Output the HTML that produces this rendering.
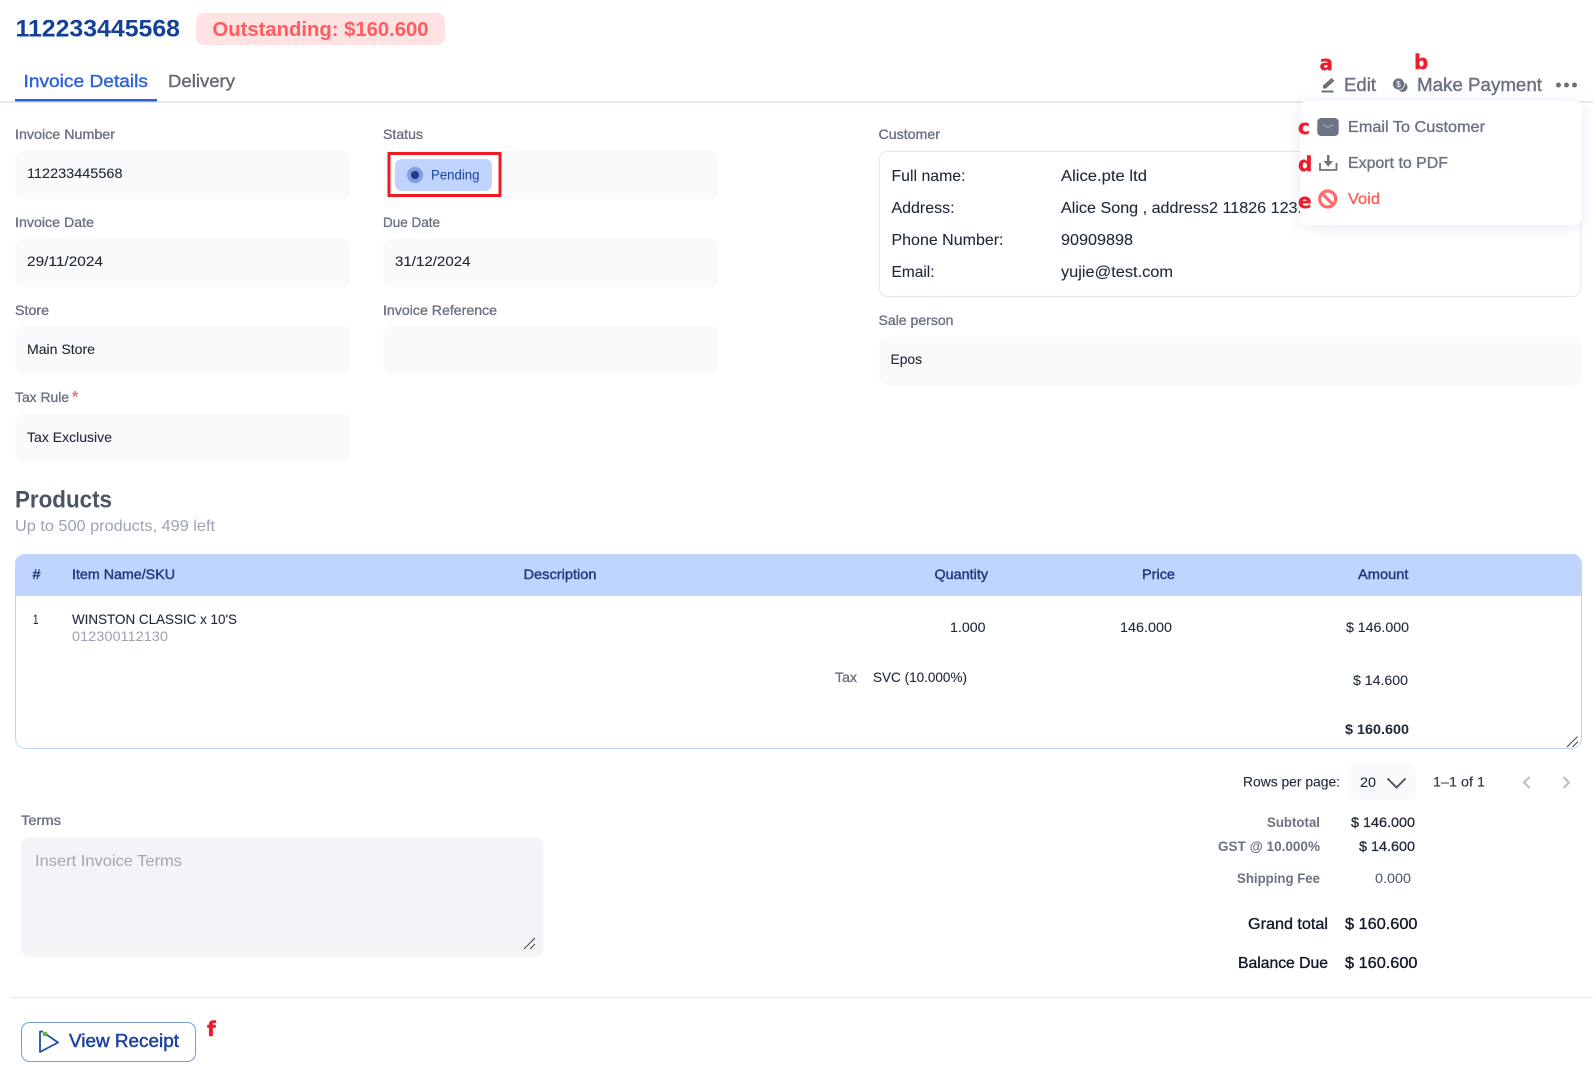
<!DOCTYPE html>
<html lang="en">
<head>
<meta charset="utf-8">
<title>Invoice 112233445568</title>
<style>
html,body{margin:0;padding:0;background:#fff;width:1593px;height:1076px;overflow:hidden}
svg{display:block}
text{font-family:"Liberation Sans",Arial,sans-serif;white-space:pre}
.l{font-size:14px;fill:#6b7280;stroke:#6b7280;stroke-width:.35}
.v{font-size:14px;fill:#1f2937;stroke:#1f2937;stroke-width:.1}
.c{font-size:16px;fill:#1f2937;stroke:#1f2937;stroke-width:.1}
.th{font-size:14px;fill:#1e3a7a;stroke:#1e3a7a;stroke-width:.4}
.menu{font-size:16px;fill:#6b7280;stroke:#6b7280;stroke-width:.35}
.act{font-size:18px;fill:#6b7280;stroke:#6b7280;stroke-width:.4}
.red{font-family:"DejaVu Sans",sans-serif;font-weight:bold;font-size:20px;fill:#ed1c2e;stroke:#ed1c2e;stroke-width:.4}
.s{font-size:14px;fill:#6b7280;font-weight:bold}
.t{font-size:16px;fill:#111827;stroke:#111827;stroke-width:.35}
</style>
</head>
<body>
<svg width="1593" height="1076" viewBox="0 0 1593 1076" xmlns="http://www.w3.org/2000/svg">
<rect width="1593" height="1076" fill="#fff"/>

<!-- header -->
<text x="15.5" y="36.5" font-size="24.5" font-weight="bold" fill="#154099" textLength="164.5" lengthAdjust="spacingAndGlyphs">112233445568</text>
<rect x="196" y="13" width="249" height="32" rx="8" fill="#ffe3e3"/>
<text x="212.5" y="36" font-size="20.5" font-weight="bold" fill="#ff5c5f" textLength="216" lengthAdjust="spacingAndGlyphs">Outstanding: $160.600</text>

<!-- tabs -->
<text x="23.5" y="87" font-size="17.5" fill="#2e62d9" stroke="#2e62d9" stroke-width=".4" textLength="124.5" lengthAdjust="spacingAndGlyphs">Invoice Details</text>
<text x="168" y="87" font-size="17.5" fill="#666a70" stroke="#666a70" stroke-width=".4" textLength="67" lengthAdjust="spacingAndGlyphs">Delivery</text>
<rect x="0" y="101" width="1593" height="2" fill="#e3e8f5"/>
<rect x="15" y="99" width="142" height="2.5" fill="#2f5fd6"/>

<!-- form labels + inputs column 1 -->
<text class="l" x="15" y="139" textLength="100" lengthAdjust="spacingAndGlyphs">Invoice Number</text>
<rect x="15" y="151" width="336" height="48" rx="8" fill="#f9fafb"/>
<text class="v" x="27" y="178" textLength="95.5" lengthAdjust="spacingAndGlyphs">112233445568</text>

<text class="l" x="15" y="227" textLength="79" lengthAdjust="spacingAndGlyphs">Invoice Date</text>
<rect x="15" y="239" width="336" height="48" rx="8" fill="#f9fafb"/>
<text class="v" x="27" y="266" textLength="76" lengthAdjust="spacingAndGlyphs">29/11/2024</text>

<text class="l" x="15" y="315" textLength="34" lengthAdjust="spacingAndGlyphs">Store</text>
<rect x="15" y="326" width="336" height="48" rx="8" fill="#f9fafb"/>
<text class="v" x="27" y="354" textLength="68" lengthAdjust="spacingAndGlyphs">Main Store</text>

<text class="l" x="15" y="402" textLength="54" lengthAdjust="spacingAndGlyphs">Tax Rule</text>
<text x="72" y="402" font-size="16" font-weight="bold" fill="#ff6b6b">*</text>
<rect x="15" y="414" width="336" height="48" rx="8" fill="#f9fafb"/>
<text class="v" x="27" y="442" textLength="85" lengthAdjust="spacingAndGlyphs">Tax Exclusive</text>

<!-- column 2 -->
<text class="l" x="383" y="139" textLength="40" lengthAdjust="spacingAndGlyphs">Status</text>
<rect x="383" y="151" width="336" height="48" rx="8" fill="#f9fafb"/>
<rect x="389" y="153.5" width="111" height="42" fill="#fff" stroke="#ed1c24" stroke-width="3"/>
<rect x="395" y="159" width="97" height="32" rx="7" fill="#bfd4fc"/>
<circle cx="415" cy="175" r="8" fill="#7f9de0"/>
<circle cx="415" cy="175" r="4" fill="#1e3a8a"/>
<text x="431" y="179.500" font-size="14" fill="#1e429f" textLength="48.500" lengthAdjust="spacingAndGlyphs">Pending</text>

<text class="l" x="383" y="227" textLength="57" lengthAdjust="spacingAndGlyphs">Due Date</text>
<rect x="383" y="239" width="336" height="48" rx="8" fill="#f9fafb"/>
<text class="v" x="395" y="266" textLength="75.500" lengthAdjust="spacingAndGlyphs">31/12/2024</text>

<text class="l" x="383" y="315" textLength="114" lengthAdjust="spacingAndGlyphs">Invoice Reference</text>
<rect x="383" y="326" width="336" height="48" rx="8" fill="#f9fafb"/>

<!-- customer -->
<text class="l" x="878.500" y="139" textLength="61.500" lengthAdjust="spacingAndGlyphs">Customer</text>
<rect x="879.500" y="151.500" width="701.500" height="145" rx="8" fill="#fff" stroke="#e3e8f0"/>
<text class="c" x="891.500" y="181" textLength="74" lengthAdjust="spacingAndGlyphs">Full name:</text>
<text class="c" x="891.500" y="213" textLength="63" lengthAdjust="spacingAndGlyphs">Address:</text>
<text class="c" x="891.500" y="245" textLength="112" lengthAdjust="spacingAndGlyphs">Phone Number:</text>
<text class="c" x="891.500" y="277" textLength="43" lengthAdjust="spacingAndGlyphs">Email:</text>
<text class="c" x="1061" y="181" textLength="86" lengthAdjust="spacingAndGlyphs">Alice.pte ltd</text>
<text class="c" x="1061" y="213" textLength="241" lengthAdjust="spacingAndGlyphs">Alice Song , address2 11826 123.</text>
<text class="c" x="1061" y="245" textLength="72" lengthAdjust="spacingAndGlyphs">90909898</text>
<text class="c" x="1061" y="277" textLength="112" lengthAdjust="spacingAndGlyphs">yujie@test.com</text>

<text class="l" x="878.500" y="325" textLength="75" lengthAdjust="spacingAndGlyphs">Sale person</text>
<rect x="879" y="337" width="702.500" height="48" rx="8" fill="#f9fafb"/>
<text class="v" x="890.500" y="364" textLength="31.500" lengthAdjust="spacingAndGlyphs">Epos</text>

<!-- actions -->
<path d="M1323 88.500v-3l8.500-7.500 3 2.800-8.500 7.700z" fill="#6b7280"/>
<rect x="1321.500" y="90.500" width="12" height="2" fill="#6b7280"/>
<text class="act" x="1344" y="91" textLength="32" lengthAdjust="spacingAndGlyphs">Edit</text>
<circle cx="1402.500" cy="87" r="5" fill="#6b7280"/>
<circle cx="1398.500" cy="84" r="6" fill="#6b7280" stroke="#fff" stroke-width=".8"/>
<text x="1398.500" y="87" font-size="8" fill="#fff" text-anchor="middle">$</text>
<text class="act" x="1417" y="91" textLength="125" lengthAdjust="spacingAndGlyphs">Make Payment</text>
<circle cx="1558.500" cy="85" r="2.500" fill="#6b7280"/>
<circle cx="1566.500" cy="85" r="2.500" fill="#6b7280"/>
<circle cx="1574.500" cy="85" r="2.500" fill="#6b7280"/>

<!-- dropdown -->
<rect x="1300" y="101" width="281.500" height="124" rx="6" fill="#fff" style="filter:drop-shadow(0 2px 8px rgba(110,140,210,.18))"/>
<rect x="1317.300" y="118" width="21.400" height="18" rx="4" fill="#6b7385"/>
<path d="M1323 124.500l5 3 5-3" fill="none" stroke="#b5bbc6" stroke-width=".9"/>
<text class="menu" x="1348" y="132" textLength="137" lengthAdjust="spacingAndGlyphs">Email To Customer</text>
<path d="M1320 163v7h16.500v-7" fill="none" stroke="#6b7280" stroke-width="1.800"/>
<path d="M1327 155h2.500v6h3.500l-4.750 5.500-4.750-5.500h3.500z" fill="#6b7280"/>
<text class="menu" x="1348" y="168" textLength="100" lengthAdjust="spacingAndGlyphs">Export to PDF</text>
<circle cx="1327.700" cy="199" r="8" fill="none" stroke="#ff6b6b" stroke-width="3.200"/>
<path d="M1322 193.500l11.500 11.500" stroke="#ff6b6b" stroke-width="3.200"/>
<text x="1348" y="204" font-size="16" fill="#ff5c5f" stroke="#ff5c5f" stroke-width=".35" textLength="32" lengthAdjust="spacingAndGlyphs">Void</text>

<!-- annotations -->
<text class="red" x="1319.500" y="70">a</text>
<text class="red" x="1414" y="69">b</text>
<text class="red" x="1298" y="134">c</text>
<text class="red" x="1298" y="171">d</text>
<text class="red" x="1298" y="208">e</text>
<text class="red" x="207" y="1036">f</text>

<!-- products -->
<text x="15" y="507.500" font-size="24" font-weight="bold" fill="#4b5563" textLength="97" lengthAdjust="spacingAndGlyphs">Products</text>
<text x="15" y="531" font-size="16" fill="#9ca3af" textLength="200" lengthAdjust="spacingAndGlyphs">Up to 500 products, 499 left</text>

<!-- table -->
<rect x="15.500" y="554.500" width="1566" height="194" rx="10" fill="#fff" stroke="#bfd4fe"/>
<path d="M15 596V564a10 10 0 0 1 10-10H1572a10 10 0 0 1 10 10V596z" fill="#bfd4fe"/>
<text class="th" x="32.500" y="579" textLength="8" lengthAdjust="spacingAndGlyphs">#</text>
<text class="th" x="72" y="579" textLength="103" lengthAdjust="spacingAndGlyphs">Item Name/SKU</text>
<text class="th" x="523.500" y="579" textLength="73" lengthAdjust="spacingAndGlyphs">Description</text>
<text class="th" x="934.500" y="579" textLength="53.500" lengthAdjust="spacingAndGlyphs">Quantity</text>
<text class="th" x="1142" y="579" textLength="33" lengthAdjust="spacingAndGlyphs">Price</text>
<text class="th" x="1358" y="579" textLength="50.500" lengthAdjust="spacingAndGlyphs">Amount</text>

<text class="v" x="33" y="624" textLength="5.500" lengthAdjust="spacingAndGlyphs">1</text>
<text class="v" x="72" y="624" textLength="165" lengthAdjust="spacingAndGlyphs">WINSTON CLASSIC x 10'S</text>
<text x="72" y="641" font-size="14" fill="#9ca3af" textLength="96" lengthAdjust="spacingAndGlyphs">012300112130</text>
<text class="v" x="950" y="632" textLength="35.500" lengthAdjust="spacingAndGlyphs">1.000</text>
<text class="v" x="1120" y="632" textLength="52" lengthAdjust="spacingAndGlyphs">146.000</text>
<text class="v" x="1346" y="632" textLength="63" lengthAdjust="spacingAndGlyphs">$ 146.000</text>
<text class="l" x="835" y="682" textLength="22" lengthAdjust="spacingAndGlyphs">Tax</text>
<text class="v" x="873" y="682" textLength="94" lengthAdjust="spacingAndGlyphs">SVC (10.000%)</text>
<text class="v" x="1353" y="685" textLength="55" lengthAdjust="spacingAndGlyphs">$ 14.600</text>
<text x="1345" y="734" font-size="14" font-weight="bold" fill="#1f2937" textLength="64" lengthAdjust="spacingAndGlyphs">$ 160.600</text>
<path d="M1567 747l10.500-10.500M1572.500 747l5.500-5.500" stroke="#444" stroke-width="1" fill="none"/>

<!-- pagination -->
<text class="v" x="1243" y="786.500" textLength="97" lengthAdjust="spacingAndGlyphs">Rows per page:</text>
<rect x="1348" y="764" width="68" height="36" rx="8" fill="#f9fafb"/>
<text class="v" x="1360" y="787" textLength="16" lengthAdjust="spacingAndGlyphs">20</text>
<path d="M1387.500 778.500l9 9 9-9" fill="none" stroke="#555b66" stroke-width="2"/>
<text class="v" x="1433" y="786.500" textLength="52" lengthAdjust="spacingAndGlyphs">1–1 of 1</text>
<path d="M1529.500 777l-5.500 5.500 5.500 5.500" fill="none" stroke="#bdbdbd" stroke-width="2"/>
<path d="M1563.500 777l5.500 5.500-5.500 5.500" fill="none" stroke="#bdbdbd" stroke-width="2"/>

<!-- totals -->
<text class="s" x="1267" y="827" textLength="53" lengthAdjust="spacingAndGlyphs">Subtotal</text>
<text x="1351" y="827" font-size="14" fill="#1f2937" stroke="#1f2937" stroke-width=".3" textLength="64" lengthAdjust="spacingAndGlyphs">$ 146.000</text>
<text class="s" x="1218" y="851" textLength="102" lengthAdjust="spacingAndGlyphs">GST @ 10.000%</text>
<text x="1359" y="851" font-size="14" fill="#1f2937" stroke="#1f2937" stroke-width=".3" textLength="56" lengthAdjust="spacingAndGlyphs">$ 14.600</text>
<text class="s" x="1237" y="883" textLength="83" lengthAdjust="spacingAndGlyphs">Shipping Fee</text>
<text x="1375" y="883" font-size="14" fill="#4b5563" textLength="36" lengthAdjust="spacingAndGlyphs">0.000</text>
<text class="t" x="1248" y="929" textLength="80" lengthAdjust="spacingAndGlyphs">Grand total</text>
<text class="t" x="1345" y="929" textLength="72.500" lengthAdjust="spacingAndGlyphs">$ 160.600</text>
<text class="t" x="1238" y="968" textLength="90" lengthAdjust="spacingAndGlyphs">Balance Due</text>
<text class="t" x="1345" y="968" textLength="72.500" lengthAdjust="spacingAndGlyphs">$ 160.600</text>

<!-- terms -->
<text class="l" x="21" y="825" textLength="40" lengthAdjust="spacingAndGlyphs">Terms</text>
<rect x="21" y="837" width="522" height="120" rx="8" fill="#f3f4f8"/>
<text x="35" y="866" font-size="16" fill="#a3a6ad" textLength="147" lengthAdjust="spacingAndGlyphs">Insert Invoice Terms</text>
<path d="M524 949l11-11M530 949l5-5" stroke="#444" stroke-width="1" fill="none"/>

<!-- footer -->
<rect x="10" y="997" width="1583" height="1" fill="#e5e9f2"/>
<rect x="21.500" y="1022.500" width="174" height="39" rx="8" fill="#fff" stroke="#7b9bd8"/>
<path d="M43 1031.500h-3v20.500l18-9.500-13-9" fill="none" stroke="#1e50a8" stroke-width="1.800" stroke-linejoin="round"/>
<circle cx="45" cy="1034" r="2.400" fill="#62b24a"/>
<text x="69" y="1047" font-size="18" fill="#1e429f" stroke="#1e429f" stroke-width=".5" textLength="110" lengthAdjust="spacingAndGlyphs">View Receipt</text>
</svg>
</body>
</html>
